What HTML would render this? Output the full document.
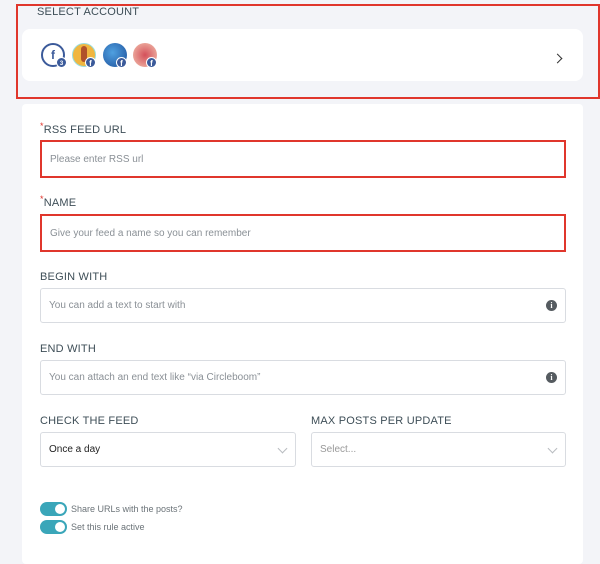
<!DOCTYPE html>
<html><head><style>
*{box-sizing:border-box;margin:0;padding:0}
body{width:600px;height:544px;background:#f3f4f8;font-family:"Liberation Sans",sans-serif;position:relative;overflow:hidden}
.abs{position:absolute}
.lbl{position:absolute;font-size:11px;color:#3e4e57;letter-spacing:.2px}
.lbl .st{color:#e0322a;font-size:9px;vertical-align:top;position:relative;top:-3px}
.inp{position:absolute;background:#fff;border:1px solid #d9dce1;border-radius:3px;font-size:10px;color:#8a9096;padding-left:8px;display:flex;align-items:center}
.red{border:2px solid #e0362c;border-radius:0}
.info{position:absolute;right:8px;top:50%;margin-top:-5.5px;width:11px;height:11px;border-radius:50%;background:#555b60;color:#fff;font-size:8px;font-weight:bold;text-align:center;line-height:11px;font-family:"Liberation Serif",serif}
.chev{position:absolute;right:9px;top:50%;margin-top:-5px;width:7px;height:7px;border-right:1px solid #b8bcc0;border-bottom:1px solid #b8bcc0;transform:rotate(45deg)}
.tog{position:absolute;left:40px;width:27px;height:14px;border-radius:7px;background:#3aa6b9}
.tog::after{content:"";position:absolute;right:2px;top:2px;width:10px;height:10px;border-radius:50%;background:#fff}
.tl{position:absolute;left:71px;font-size:9px;color:#6b7378}
.av{position:absolute;top:43px;width:24px;height:24px;border-radius:50%}
.fb{position:absolute;width:11px;height:11px;border-radius:50%;background:#3b5a9a;color:#fff;font-size:8px;font-weight:bold;text-align:center;line-height:12px;border:1px solid #fff}
</style></head><body>
<div class="abs" style="left:16px;top:4px;width:584px;height:95px;border:2px solid #e0362c"></div>
<div class="lbl" style="left:37px;top:6px">SELECT ACCOUNT</div>
<div class="abs" style="left:22px;top:29px;width:561px;height:52px;background:#fff;border-radius:8px"></div>
<div class="av" style="left:41px;border:2px solid #3b5a9a;background:#fff;color:#3b5a9a;font-weight:bold;font-size:12px;text-align:center;line-height:20px">f</div>
<div class="fb" style="left:56px;top:57px;font-size:6px">3</div>
<div class="av" style="left:72px;background:#f0b640;border:1px solid #9dd"></div>
<div class="abs" style="left:81px;top:46px;width:6px;height:16px;background:#b0522a;border-radius:3px"></div>
<div class="fb" style="left:85px;top:57px">f</div>
<div class="av" style="left:103px;background:radial-gradient(circle at 40% 40%,#4fa0e0,#1d4f9a)"></div>
<div class="fb" style="left:116px;top:57px">f</div>
<div class="av" style="left:133px;background:radial-gradient(circle at 50% 50%,#d4505a,#f3c4b0)"></div>
<div class="fb" style="left:146px;top:57px">f</div>
<div class="chev" style="right:auto;left:554px;top:55px;margin:0;transform:rotate(-45deg);border-color:#333;width:7px;height:7px;border-width:1.5px"></div>

<div class="abs" style="left:22px;top:104px;width:561px;height:460px;background:#fff;border-radius:4px"></div>

<div class="lbl" style="left:40px;top:124px"><span class="st">*</span>RSS FEED URL</div>
<div class="inp red" style="left:40px;top:140px;width:526px;height:38px">Please enter RSS url</div>
<div class="lbl" style="left:40px;top:197px"><span class="st">*</span>NAME</div>
<div class="inp red" style="left:40px;top:214px;width:526px;height:38px">Give your feed a name so you can remember</div>
<div class="lbl" style="left:40px;top:271px">BEGIN WITH</div>
<div class="inp" style="left:40px;top:288px;width:526px;height:35px">You can add a text to start with<div class="info">i</div></div>
<div class="lbl" style="left:40px;top:343px">END WITH</div>
<div class="inp" style="left:40px;top:360px;width:526px;height:35px">You can attach an end text like “via Circleboom”<div class="info">i</div></div>
<div class="lbl" style="left:40px;top:415px">CHECK THE FEED</div>
<div class="lbl" style="left:311px;top:415px">MAX POSTS PER UPDATE</div>
<div class="inp" style="left:40px;top:432px;width:256px;height:35px;color:#222">Once a day<div class="chev"></div></div>
<div class="inp" style="left:311px;top:432px;width:255px;height:35px;color:#999">Select...<div class="chev"></div></div>
<div class="tog" style="top:502px"></div><div class="tl" style="top:504px">Share URLs with the posts?</div>
<div class="tog" style="top:520px"></div><div class="tl" style="top:522px">Set this rule active</div>
</body></html>
